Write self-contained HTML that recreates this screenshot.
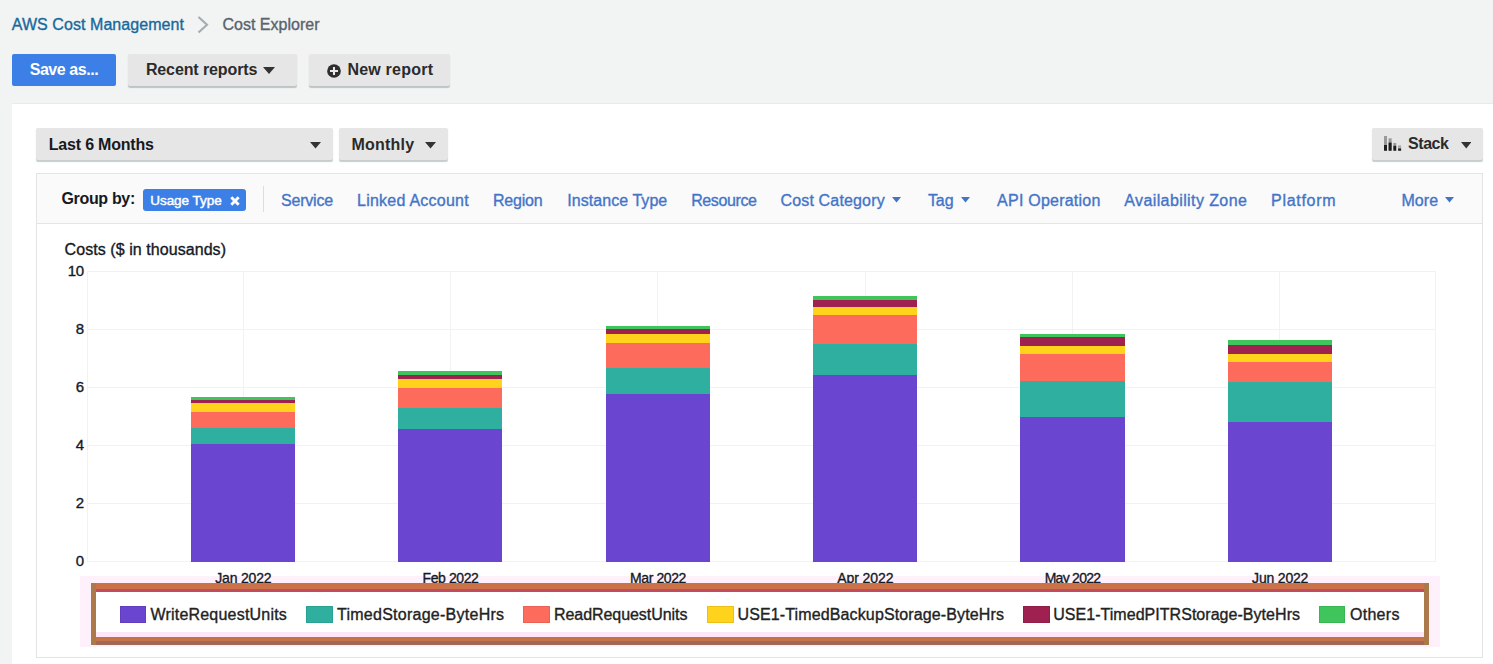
<!DOCTYPE html><html><head><meta charset="utf-8"><style>
html,body{margin:0;padding:0;width:1493px;height:664px;overflow:hidden;background:#f2f3f3;font-family:"Liberation Sans",sans-serif;}
.t{position:absolute;white-space:nowrap;}
.t[style*="font-weight:400"]{-webkit-text-stroke:0.35px currentColor;}
.r{position:absolute;}
</style></head><body>
<div class="t " style="left:11.80px;top:17.00px;font-size:16px;line-height:16px;color:#18699c;font-weight:400;letter-spacing:0.064px;">AWS Cost Management</div>
<svg class="r" style="left:196px;top:15px" width="14" height="19" viewBox="0 0 14 19"><path d="M2.5 2L11 9.8L2.5 17.6" fill="none" stroke="#a3adae" stroke-width="2.1"/></svg>
<div class="t " style="left:222.50px;top:17.00px;font-size:16px;line-height:16px;color:#59636d;font-weight:400;letter-spacing:0.003px;">Cost Explorer</div>
<div class="r" style="left:12.00px;top:54.00px;width:104.00px;height:32.00px;background:#3c7fe6;border-radius:2px;"></div>
<div class="t " style="left:29.70px;top:62.00px;font-size:16px;line-height:16px;color:#ffffff;font-weight:700;letter-spacing:-0.451px;">Save as...</div>
<div class="r" style="left:128.00px;top:54.00px;width:168.50px;height:32.00px;background:#e6e6e6;border-radius:2px;box-shadow:0 1.5px 1px rgba(0,28,36,0.22);"></div>
<div class="t " style="left:145.90px;top:62.00px;font-size:16px;line-height:16px;color:#2b2b2b;font-weight:700;letter-spacing:-0.112px;">Recent reports</div>
<svg class="r" style="left:262.70px;top:67.30px" width="12" height="7" viewBox="0 0 12 7"><path d="M0 0H12L6.0 7Z" fill="#333"/></svg>
<div class="r" style="left:308.70px;top:54.00px;width:141.30px;height:32.00px;background:#e6e6e6;border-radius:2px;box-shadow:0 1.5px 1px rgba(0,28,36,0.22);"></div>
<svg class="r" style="left:326.8px;top:64px" width="14" height="14" viewBox="0 0 14 14"><circle cx="7" cy="7" r="6.85" fill="#2e2e2e"/><path d="M7 3V11M3 7H11" stroke="#e9e9e9" stroke-width="2.1"/></svg>
<div class="t " style="left:347.40px;top:62.00px;font-size:16px;line-height:16px;color:#2b2b2b;font-weight:700;letter-spacing:0.222px;">New report</div>
<div class="r" style="left:12.00px;top:102.50px;width:1481.00px;height:1.50px;background:#e9ebeb;"></div>
<div class="r" style="left:12.00px;top:104.00px;width:1481.00px;height:560.00px;background:#ffffff;"></div>
<div class="r" style="left:36.00px;top:128.20px;width:296.70px;height:32.10px;background:#e6e6e6;border-radius:2px;box-shadow:0 1.5px 1px rgba(0,28,36,0.22);"></div>
<div class="t " style="left:48.80px;top:137.00px;font-size:16px;line-height:16px;color:#16191f;font-weight:700;letter-spacing:-0.200px;">Last 6 Months</div>
<svg class="r" style="left:309.90px;top:142.20px" width="11" height="6.5" viewBox="0 0 11 6.5"><path d="M0 0H11L5.5 6.5Z" fill="#333"/></svg>
<div class="r" style="left:339.00px;top:128.20px;width:109.30px;height:32.10px;background:#e6e6e6;border-radius:2px;box-shadow:0 1.5px 1px rgba(0,28,36,0.22);"></div>
<div class="t " style="left:351.50px;top:137.00px;font-size:16px;line-height:16px;color:#2b2b2b;font-weight:700;letter-spacing:0.207px;">Monthly</div>
<svg class="r" style="left:425.00px;top:142.20px" width="11" height="6.5" viewBox="0 0 11 6.5"><path d="M0 0H11L5.5 6.5Z" fill="#333"/></svg>
<div class="r" style="left:1372.00px;top:128.20px;width:111.00px;height:32.10px;background:#e6e6e6;border-radius:2px;box-shadow:0 1.5px 1px rgba(0,28,36,0.22);"></div>
<svg class="r" style="left:1383.8px;top:135.9px" width="18" height="15" viewBox="0 0 18 15"><rect x="0" y="0" width="3" height="14.7" fill="#999"/><rect x="0" y="9" width="3" height="5.7" fill="#1e1e1e"/><rect x="4.6" y="2.3" width="3" height="12.4" fill="#999"/><rect x="4.6" y="6.6" width="3" height="8.1" fill="#1e1e1e"/><rect x="9.4" y="7" width="2.8" height="7.7" fill="#999"/><rect x="9.4" y="9.8" width="2.8" height="4.9" fill="#1e1e1e"/><rect x="14.1" y="9.4" width="3" height="5.3" fill="#aaa"/><rect x="14.1" y="12.5" width="3" height="2.2" fill="#1e1e1e"/></svg>
<div class="t " style="left:1408.00px;top:136.00px;font-size:16px;line-height:16px;color:#2b2b2b;font-weight:700;letter-spacing:-0.430px;">Stack</div>
<svg class="r" style="left:1460.60px;top:142.00px" width="10.5" height="6.5" viewBox="0 0 10.5 6.5"><path d="M0 0H10.5L5.25 6.5Z" fill="#333"/></svg>
<div class="r" style="left:36px;top:173px;width:1445px;height:483px;border:1px solid #e3e4e4;background:#fff;"></div>
<div class="r" style="left:37px;top:174px;width:1445px;height:49px;border-bottom:1px solid #e3e4e4;background:#fafafa;"></div>
<div class="t " style="left:61.50px;top:191.00px;font-size:16px;line-height:16px;color:#16191f;font-weight:700;letter-spacing:-0.338px;">Group by:</div>
<div class="r" style="left:143.00px;top:189.30px;width:103.40px;height:22.00px;background:#3c7fe6;border-radius:3px;"></div>
<div class="t " style="left:150.20px;top:194.00px;font-size:13.5px;line-height:13.5px;color:#ffffff;font-weight:400;letter-spacing:-0.024px;-webkit-text-stroke:0.45px #fff;">Usage Type</div>
<svg class="r" style="left:230px;top:195.5px" width="10" height="10" viewBox="0 0 10 10"><path d="M1.3 1.3L8.7 8.7M8.7 1.3L1.3 8.7" stroke="#fff" stroke-width="2.9"/></svg>
<div class="r" style="left:263.00px;top:186.00px;width:1.00px;height:26.00px;background:#dddddd;"></div>
<div class="t " style="left:281.00px;top:193.00px;font-size:16px;line-height:16px;color:#4474c8;font-weight:400;letter-spacing:-0.210px;">Service</div>
<div class="t " style="left:357.00px;top:193.00px;font-size:16px;line-height:16px;color:#4474c8;font-weight:400;letter-spacing:0.242px;">Linked Account</div>
<div class="t " style="left:492.90px;top:193.00px;font-size:16px;line-height:16px;color:#4474c8;font-weight:400;letter-spacing:-0.184px;">Region</div>
<div class="t " style="left:567.20px;top:193.00px;font-size:16px;line-height:16px;color:#4474c8;font-weight:400;letter-spacing:0.062px;">Instance Type</div>
<div class="t " style="left:691.20px;top:193.00px;font-size:16px;line-height:16px;color:#4474c8;font-weight:400;letter-spacing:-0.383px;">Resource</div>
<div class="t " style="left:780.50px;top:193.00px;font-size:16px;line-height:16px;color:#4474c8;font-weight:400;letter-spacing:0.155px;">Cost Category</div>
<div class="t " style="left:927.90px;top:193.00px;font-size:16px;line-height:16px;color:#4474c8;font-weight:400;letter-spacing:-0.080px;">Tag</div>
<div class="t " style="left:997.10px;top:193.00px;font-size:16px;line-height:16px;color:#4474c8;font-weight:400;letter-spacing:0.227px;">API Operation</div>
<div class="t " style="left:1124.20px;top:193.00px;font-size:16px;line-height:16px;color:#4474c8;font-weight:400;letter-spacing:0.404px;">Availability Zone</div>
<div class="t " style="left:1271.10px;top:193.00px;font-size:16px;line-height:16px;color:#4474c8;font-weight:400;letter-spacing:0.700px;">Platform</div>
<div class="t " style="left:1401.40px;top:193.00px;font-size:16px;line-height:16px;color:#4474c8;font-weight:400;letter-spacing:0.107px;">More</div>
<svg class="r" style="left:891.60px;top:197.00px" width="9" height="5.5" viewBox="0 0 9 5.5"><path d="M0 0H9L4.5 5.5Z" fill="#4474c8"/></svg>
<svg class="r" style="left:961.20px;top:197.00px" width="9" height="5.5" viewBox="0 0 9 5.5"><path d="M0 0H9L4.5 5.5Z" fill="#4474c8"/></svg>
<svg class="r" style="left:1445.40px;top:197.00px" width="9" height="5.5" viewBox="0 0 9 5.5"><path d="M0 0H9L4.5 5.5Z" fill="#4474c8"/></svg>
<div class="t " style="left:64.60px;top:242.00px;font-size:16px;line-height:16px;color:#16191f;font-weight:400;letter-spacing:0.063px;">Costs ($ in thousands)</div>
<div class="r" style="left:87.00px;top:561.10px;width:1348.00px;height:1.00px;background:#f2f2f2;"></div>
<div class="t" style="left:0;width:83.8px;text-align:right;top:553px;font-size:15px;line-height:15px;color:#16191f;letter-spacing:-0.3px;font-weight:400;">0</div>
<div class="r" style="left:87.00px;top:503.00px;width:1348.00px;height:1.00px;background:#f2f2f2;"></div>
<div class="t" style="left:0;width:83.8px;text-align:right;top:495px;font-size:15px;line-height:15px;color:#16191f;letter-spacing:-0.3px;font-weight:400;">2</div>
<div class="r" style="left:87.00px;top:444.90px;width:1348.00px;height:1.00px;background:#f2f2f2;"></div>
<div class="t" style="left:0;width:83.8px;text-align:right;top:437px;font-size:15px;line-height:15px;color:#16191f;letter-spacing:-0.3px;font-weight:400;">4</div>
<div class="r" style="left:87.00px;top:386.80px;width:1348.00px;height:1.00px;background:#f2f2f2;"></div>
<div class="t" style="left:0;width:83.8px;text-align:right;top:379px;font-size:15px;line-height:15px;color:#16191f;letter-spacing:-0.3px;font-weight:400;">6</div>
<div class="r" style="left:87.00px;top:328.70px;width:1348.00px;height:1.00px;background:#f2f2f2;"></div>
<div class="t" style="left:0;width:83.8px;text-align:right;top:321px;font-size:15px;line-height:15px;color:#16191f;letter-spacing:-0.3px;font-weight:400;">8</div>
<div class="r" style="left:87.00px;top:270.60px;width:1348.00px;height:1.00px;background:#f2f2f2;"></div>
<div class="t" style="left:0;width:83.8px;text-align:right;top:263px;font-size:15px;line-height:15px;color:#16191f;letter-spacing:-0.3px;font-weight:400;">10</div>
<div class="r" style="left:86.50px;top:271.10px;width:1.00px;height:291.00px;background:#f2f2f2;"></div>
<div class="r" style="left:242.50px;top:271.10px;width:1.00px;height:291.00px;background:#f2f2f2;"></div>
<div class="r" style="left:449.85px;top:271.10px;width:1.00px;height:291.00px;background:#f2f2f2;"></div>
<div class="r" style="left:657.30px;top:271.10px;width:1.00px;height:291.00px;background:#f2f2f2;"></div>
<div class="r" style="left:864.50px;top:271.10px;width:1.00px;height:291.00px;background:#f2f2f2;"></div>
<div class="r" style="left:1071.95px;top:271.10px;width:1.00px;height:291.00px;background:#f2f2f2;"></div>
<div class="r" style="left:1279.35px;top:271.10px;width:1.00px;height:291.00px;background:#f2f2f2;"></div>
<div class="r" style="left:1434.50px;top:271.10px;width:1.00px;height:291.00px;background:#f2f2f2;"></div>
<div class="r" style="left:190.70px;top:396.80px;width:104.60px;height:165.20px;background:#3fc55c;"></div>
<div class="r" style="left:190.70px;top:399.90px;width:104.60px;height:162.10px;background:#9e214f;"></div>
<div class="r" style="left:190.70px;top:403.10px;width:104.60px;height:158.90px;background:#ffd21c;"></div>
<div class="r" style="left:190.70px;top:411.70px;width:104.60px;height:150.30px;background:#fd6b5d;"></div>
<div class="r" style="left:190.70px;top:427.90px;width:104.60px;height:134.10px;background:#2eaf9f;"></div>
<div class="r" style="left:190.70px;top:444.20px;width:104.60px;height:117.80px;background:#6945d0;"></div>
<div class="r" style="left:398.20px;top:371.40px;width:104.30px;height:190.60px;background:#3fc55c;"></div>
<div class="r" style="left:398.20px;top:374.50px;width:104.30px;height:187.50px;background:#9e214f;"></div>
<div class="r" style="left:398.20px;top:378.70px;width:104.30px;height:183.30px;background:#ffd21c;"></div>
<div class="r" style="left:398.20px;top:387.70px;width:104.30px;height:174.30px;background:#fd6b5d;"></div>
<div class="r" style="left:398.20px;top:408.00px;width:104.30px;height:154.00px;background:#2eaf9f;"></div>
<div class="r" style="left:398.20px;top:429.30px;width:104.30px;height:132.70px;background:#6945d0;"></div>
<div class="r" style="left:605.60px;top:325.80px;width:104.40px;height:236.20px;background:#3fc55c;"></div>
<div class="r" style="left:605.60px;top:328.80px;width:104.40px;height:233.20px;background:#9e214f;"></div>
<div class="r" style="left:605.60px;top:334.20px;width:104.40px;height:227.80px;background:#ffd21c;"></div>
<div class="r" style="left:605.60px;top:342.80px;width:104.40px;height:219.20px;background:#fd6b5d;"></div>
<div class="r" style="left:605.60px;top:367.90px;width:104.40px;height:194.10px;background:#2eaf9f;"></div>
<div class="r" style="left:605.60px;top:393.60px;width:104.40px;height:168.40px;background:#6945d0;"></div>
<div class="r" style="left:812.80px;top:296.30px;width:104.40px;height:265.70px;background:#3fc55c;"></div>
<div class="r" style="left:812.80px;top:299.60px;width:104.40px;height:262.40px;background:#9e214f;"></div>
<div class="r" style="left:812.80px;top:306.50px;width:104.40px;height:255.50px;background:#ffd21c;"></div>
<div class="r" style="left:812.80px;top:315.10px;width:104.40px;height:246.90px;background:#fd6b5d;"></div>
<div class="r" style="left:812.80px;top:343.80px;width:104.40px;height:218.20px;background:#2eaf9f;"></div>
<div class="r" style="left:812.80px;top:374.60px;width:104.40px;height:187.40px;background:#6945d0;"></div>
<div class="r" style="left:1020.10px;top:334.10px;width:104.70px;height:227.90px;background:#3fc55c;"></div>
<div class="r" style="left:1020.10px;top:336.60px;width:104.70px;height:225.40px;background:#9e214f;"></div>
<div class="r" style="left:1020.10px;top:345.70px;width:104.70px;height:216.30px;background:#ffd21c;"></div>
<div class="r" style="left:1020.10px;top:354.00px;width:104.70px;height:208.00px;background:#fd6b5d;"></div>
<div class="r" style="left:1020.10px;top:381.30px;width:104.70px;height:180.70px;background:#2eaf9f;"></div>
<div class="r" style="left:1020.10px;top:416.90px;width:104.70px;height:145.10px;background:#6945d0;"></div>
<div class="r" style="left:1227.90px;top:340.20px;width:103.90px;height:221.80px;background:#3fc55c;"></div>
<div class="r" style="left:1227.90px;top:344.50px;width:103.90px;height:217.50px;background:#9e214f;"></div>
<div class="r" style="left:1227.90px;top:354.00px;width:103.90px;height:208.00px;background:#ffd21c;"></div>
<div class="r" style="left:1227.90px;top:362.30px;width:103.90px;height:199.70px;background:#fd6b5d;"></div>
<div class="r" style="left:1227.90px;top:382.10px;width:103.90px;height:179.90px;background:#2eaf9f;"></div>
<div class="r" style="left:1227.90px;top:421.90px;width:103.90px;height:140.10px;background:#6945d0;"></div>
<div class="r" style="left:80.00px;top:575.70px;width:1359.60px;height:71.80px;background:#fef1fc;"></div>
<div class="t " style="left:215.25px;top:571.00px;font-size:14px;line-height:14px;color:#16191f;font-weight:400;letter-spacing:-0.187px;">Jan 2022</div>
<div class="t " style="left:422.60px;top:571.00px;font-size:14px;line-height:14px;color:#16191f;font-weight:400;letter-spacing:-0.407px;">Feb 2022</div>
<div class="t " style="left:630.05px;top:571.00px;font-size:14px;line-height:14px;color:#16191f;font-weight:400;letter-spacing:-0.407px;">Mar 2022</div>
<div class="t " style="left:837.25px;top:571.00px;font-size:14px;line-height:14px;color:#16191f;font-weight:400;letter-spacing:-0.077px;">Apr 2022</div>
<div class="t " style="left:1044.70px;top:571.00px;font-size:14px;line-height:14px;color:#16191f;font-weight:400;letter-spacing:-0.737px;">May 2022</div>
<div class="t " style="left:1252.10px;top:571.00px;font-size:14px;line-height:14px;color:#16191f;font-weight:400;letter-spacing:-0.187px;">Jun 2022</div>
<div class="r" style="left:91.00px;top:583.40px;width:1337.50px;height:61.40px;background:#ac7a4a;"></div>
<div class="r" style="left:96.00px;top:583.40px;width:1327.50px;height:5.20px;background:#cc7249;"></div>
<div class="r" style="left:96.00px;top:588.60px;width:1327.50px;height:3.40px;background:#c24b5e;"></div>
<div class="r" style="left:96.00px;top:636.50px;width:1327.50px;height:4.30px;background:#c8724a;"></div>
<div class="r" style="left:96.00px;top:640.80px;width:1327.50px;height:4.00px;background:#9e6a55;"></div>
<div class="r" style="left:96.00px;top:592.00px;width:1327.50px;height:44.50px;background:#ffffff;"></div>
<div class="r" style="left:96.00px;top:632.00px;width:1327.50px;height:4.50px;background:#fde6f6;"></div>
<div class="r" style="left:119.50px;top:606.20px;width:26.60px;height:17.10px;background:#6945d0;box-shadow:inset 0 0 0 1px rgba(0,0,0,0.08);"></div>
<div class="t " style="left:150.40px;top:607.00px;font-size:16px;line-height:16px;color:#222;font-weight:400;letter-spacing:0.211px;">WriteRequestUnits</div>
<div class="r" style="left:306.00px;top:606.20px;width:26.60px;height:17.10px;background:#2eaf9f;box-shadow:inset 0 0 0 1px rgba(0,0,0,0.08);"></div>
<div class="t " style="left:337.00px;top:607.00px;font-size:16px;line-height:16px;color:#222;font-weight:400;letter-spacing:0.260px;">TimedStorage-ByteHrs</div>
<div class="r" style="left:523.30px;top:606.20px;width:26.60px;height:17.10px;background:#fd6b5d;box-shadow:inset 0 0 0 1px rgba(0,0,0,0.08);"></div>
<div class="t " style="left:554.00px;top:607.00px;font-size:16px;line-height:16px;color:#222;font-weight:400;letter-spacing:-0.061px;">ReadRequestUnits</div>
<div class="r" style="left:707.20px;top:606.20px;width:26.60px;height:17.10px;background:#ffd21c;box-shadow:inset 0 0 0 1px rgba(0,0,0,0.08);"></div>
<div class="t " style="left:737.50px;top:607.00px;font-size:16px;line-height:16px;color:#222;font-weight:400;letter-spacing:0.129px;">USE1-TimedBackupStorage-ByteHrs</div>
<div class="r" style="left:1023.00px;top:606.20px;width:26.60px;height:17.10px;background:#9e214f;box-shadow:inset 0 0 0 1px rgba(0,0,0,0.08);"></div>
<div class="t " style="left:1053.20px;top:607.00px;font-size:16px;line-height:16px;color:#222;font-weight:400;letter-spacing:0.040px;">USE1-TimedPITRStorage-ByteHrs</div>
<div class="r" style="left:1318.80px;top:606.20px;width:26.60px;height:17.10px;background:#3fc55c;box-shadow:inset 0 0 0 1px rgba(0,0,0,0.08);"></div>
<div class="t " style="left:1349.90px;top:607.00px;font-size:16px;line-height:16px;color:#222;font-weight:400;letter-spacing:0.300px;">Others</div>
</body></html>
